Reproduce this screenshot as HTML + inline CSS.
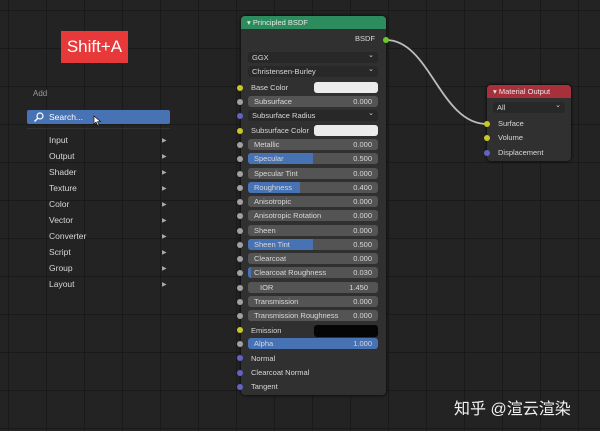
<!DOCTYPE html>
<html><head><meta charset="utf-8"><style>
*{margin:0;padding:0;box-sizing:border-box}
body{width:600px;height:431px;overflow:hidden;position:relative;font-family:"Liberation Sans",sans-serif;font-size:7.5px;color:#d8d8d8;
background-color:#232323;
background-image:linear-gradient(90deg,#1a1a1a 1px,transparent 1px),linear-gradient(#1a1a1a 1px,transparent 1px);
background-size:38px 38px;background-position:8px 10px}
.a{position:absolute}
.node{position:absolute;background:#303030;border-radius:4px;box-shadow:0 0 3px #000}
.f{position:absolute;left:248px;width:130px;height:11px;border-radius:3px;background:#545454;line-height:11px;padding:0 6px;white-space:nowrap}
.f .v{position:absolute;right:6px;top:0}
.dd{background:#282828;padding-left:4px}
.dd:after{content:"⌄";position:absolute;right:4px;top:-2px;font-size:7px}
.bar{position:absolute;left:0;top:0;bottom:0;background:#4772b3;border-radius:3px 0 0 3px}
.f span{position:relative}
.l{position:absolute;left:251px;line-height:11px}
.s{position:absolute;width:6px;height:6px;border-radius:50%;left:237px;background:#a1a1a1}
.y{background:#c7c729}.b{background:#6363c7}
.m{position:absolute;left:49px;font-size:8.5px;color:#d8d8d8}
.ar{position:absolute;left:162px;font-size:6px;color:#aaa}
</style></head><body>
<svg class="a" style="left:0;top:0" width="600" height="431"><path d="M386 40 C 430 40, 440 124, 487 124" stroke="#bdbdbd" stroke-width="1.8" fill="none"/></svg>

<div class="a" style="left:61px;top:31px;width:67px;height:32px;background:#e8393a;color:#fff;font-size:17px;line-height:32px;text-align:center">Shift+A</div>
<div class="a" style="left:33px;top:89px;font-size:8px;color:#999">Add</div>
<div class="a" style="left:27px;top:110px;width:143px;height:14px;background:#4772b3;border-radius:2px;color:#fff;font-size:8.5px;line-height:14px;padding-left:22px">Search...</div>
<svg class="a" style="left:33px;top:112px" width="12" height="10"><circle cx="7" cy="4" r="3" stroke="#fff" stroke-width="1.2" fill="none"/><path d="M5 6 L1.5 9.5" stroke="#fff" stroke-width="1.4"/></svg>
<svg class="a" style="left:93px;top:115px" width="9" height="12"><path d="M1 1 L1 9 L3 7 L5 11 L6 10.5 L4.5 6.5 L7.5 6.5 Z" fill="#fff" stroke="#000" stroke-width=".6"/></svg>
<div class="a" style="left:27px;top:128px;width:143px;height:1px;background:#333"></div>
<div class="m" style="top:135px">Input</div><div class="ar" style="top:137px">▶</div>
<div class="m" style="top:151px">Output</div><div class="ar" style="top:153px">▶</div>
<div class="m" style="top:167px">Shader</div><div class="ar" style="top:169px">▶</div>
<div class="m" style="top:183px">Texture</div><div class="ar" style="top:185px">▶</div>
<div class="m" style="top:199px">Color</div><div class="ar" style="top:201px">▶</div>
<div class="m" style="top:215px">Vector</div><div class="ar" style="top:217px">▶</div>
<div class="m" style="top:231px">Converter</div><div class="ar" style="top:233px">▶</div>
<div class="m" style="top:247px">Script</div><div class="ar" style="top:249px">▶</div>
<div class="m" style="top:263px">Group</div><div class="ar" style="top:265px">▶</div>
<div class="m" style="top:279px">Layout</div><div class="ar" style="top:281px">▶</div>

<div class="node" style="left:241px;top:16px;width:145px;height:379px"></div>
<div class="a" style="left:241px;top:16px;width:145px;height:13px;background:#2c8c5e;border-radius:4px 4px 0 0;color:#e6e6e6;line-height:13px;padding-left:6px">▾ Principled BSDF</div>
<div class="a" style="left:355px;top:34px">BSDF</div>
<div class="a" style="left:383px;top:37px;width:6px;height:6px;border-radius:50%;background:#6ec72e"></div>

<div class="f dd" style="top:52px">GGX</div>
<div class="f dd" style="top:66px">Christensen-Burley</div>
<div class="s y" style="top:85px"></div><div class="l" style="top:82px">Base Color</div><div class="a" style="left:314px;top:82px;width:64px;height:11px;background:#ececec;border-radius:3px"></div>
<div class="s" style="top:99px"></div><div class="f" style="top:96px"><span>Subsurface</span><span class="v">0.000</span></div>
<div class="s b" style="top:113px"></div><div class="f dd" style="top:110px">Subsurface Radius</div>
<div class="s y" style="top:128px"></div><div class="l" style="top:125px">Subsurface Color</div><div class="a" style="left:314px;top:125px;width:64px;height:11px;background:#ececec;border-radius:3px"></div>
<div class="s" style="top:142px"></div><div class="f" style="top:139px"><span>Metallic</span><span class="v">0.000</span></div>
<div class="s" style="top:156px"></div><div class="f" style="top:153px"><div class="bar" style="width:65px"></div><span>Specular</span><span class="v">0.500</span></div>
<div class="s" style="top:171px"></div><div class="f" style="top:168px"><span>Specular Tint</span><span class="v">0.000</span></div>
<div class="s" style="top:185px"></div><div class="f" style="top:182px"><div class="bar" style="width:52px"></div><span>Roughness</span><span class="v">0.400</span></div>
<div class="s" style="top:199px"></div><div class="f" style="top:196px"><span>Anisotropic</span><span class="v">0.000</span></div>
<div class="s" style="top:213px"></div><div class="f" style="top:210px"><span>Anisotropic Rotation</span><span class="v">0.000</span></div>
<div class="s" style="top:228px"></div><div class="f" style="top:225px"><span>Sheen</span><span class="v">0.000</span></div>
<div class="s" style="top:242px"></div><div class="f" style="top:239px"><div class="bar" style="width:65px"></div><span>Sheen Tint</span><span class="v">0.500</span></div>
<div class="s" style="top:256px"></div><div class="f" style="top:253px"><span>Clearcoat</span><span class="v">0.000</span></div>
<div class="s" style="top:270px"></div><div class="f" style="top:267px"><div class="bar" style="width:3px"></div><span>Clearcoat Roughness</span><span class="v">0.030</span></div>
<div class="s" style="top:285px"></div><div class="f" style="top:282px;padding-left:12px"><span>IOR</span><span class="v" style="right:10px">1.450</span></div>
<div class="s" style="top:299px"></div><div class="f" style="top:296px"><span>Transmission</span><span class="v">0.000</span></div>
<div class="s" style="top:313px"></div><div class="f" style="top:310px"><span>Transmission Roughness</span><span class="v">0.000</span></div>
<div class="s y" style="top:327px"></div><div class="l" style="top:325px">Emission</div><div class="a" style="left:314px;top:325px;width:64px;height:12px;background:#050505;border-radius:3px"></div>
<div class="s" style="top:341px"></div><div class="f" style="top:338px;background:#4772b3"><span>Alpha</span><span class="v">1.000</span></div>
<div class="s b" style="top:355px"></div><div class="l" style="top:353px">Normal</div>
<div class="s b" style="top:370px"></div><div class="l" style="top:367px">Clearcoat Normal</div>
<div class="s b" style="top:384px"></div><div class="l" style="top:381px">Tangent</div>

<div class="node" style="left:487px;top:85px;width:84px;height:76px"></div>
<div class="a" style="left:487px;top:85px;width:84px;height:13px;background:#a8303a;border-radius:4px 4px 0 0;color:#e6e6e6;line-height:13px;padding-left:6px">▾ Material Output</div>
<div class="f dd" style="left:493px;top:102px;width:72px">All</div>
<div class="a" style="left:484px;top:121px;width:6px;height:6px;border-radius:50%;background:#c7c729"></div><div class="a" style="left:498px;top:119px">Surface</div>
<div class="a" style="left:484px;top:135px;width:6px;height:6px;border-radius:50%;background:#c7c729"></div><div class="a" style="left:498px;top:133px">Volume</div>
<div class="a" style="left:484px;top:150px;width:6px;height:6px;border-radius:50%;background:#6363c7"></div><div class="a" style="left:498px;top:148px">Displacement</div>

<div class="a" style="left:454px;top:395px;font-family:'Liberation Sans','Noto Sans CJK SC',sans-serif;font-size:16px;color:#f2f2f2;white-space:nowrap">知乎 @渲云渲染</div>
</body></html>
